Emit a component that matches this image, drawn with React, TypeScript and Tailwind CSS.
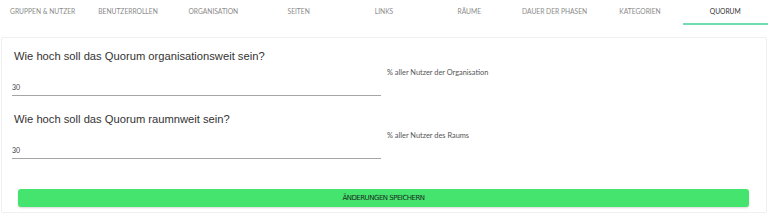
import React from "react";

const tabs = [
  "Gruppen & Nutzer",
  "Benutzerrollen",
  "Organisation",
  "Seiten",
  "Links",
  "Räume",
  "Dauer der Phasen",
  "Kategorien",
  "Quorum",
];

function Field({ question, label, value }: { question: string; label: string; value: string }) {
  return (
    <div className="flex">
      <div className="w-[369px] shrink-0">
        <div className="h-[24px] pl-[2px] text-[11.2px] leading-[24px] text-[#333] font-['Liberation_Sans',Arial,sans-serif]">
          {question}
        </div>
        <input
          defaultValue={value}
          className="block w-full h-[28px] pt-[11px] pb-0 px-0 text-[7px] text-[#444] border-0 border-b border-[#a5a5a5] outline-none bg-transparent font-['Lato',sans-serif]"
        />
      </div>
      <div className="flex items-center pl-[6px] pt-[6px] text-[7.4px] text-[#555] font-['Lato',sans-serif]">
        {label}
      </div>
    </div>
  );
}

export default function App() {
  return (
    <div className="w-[768px] h-[214px] bg-white overflow-hidden">
      <nav className="flex h-[25px]">
        {tabs.map((t) => (
          <div
            key={t}
            className={
              t === "Quorum"
                ? "flex-1 flex items-center justify-center uppercase text-[6.7px] text-[#333] border-b-2 border-[#6fdcb2] font-['Lato',sans-serif]"
                : "flex-1 flex items-center justify-center uppercase text-[6.7px] text-[#8a8a8a] border-b-2 border-transparent font-['Lato',sans-serif]"
            }
          >
            {t}
          </div>
        ))}
      </nav>
      <div className="mt-[12px] mx-[1px] h-[176px] border border-[#f0f0f0] rounded-[2px] pt-[6px] pl-[10px] pr-[10px]">
        <Field
          question="Wie hoch soll das Quorum organisationsweit sein?"
          label="% aller Nutzer der Organisation"
          value="30"
        />
        <div className="h-[11px]" />
        <Field
          question="Wie hoch soll das Quorum raumnweit sein?"
          label="% aller Nutzer des Raums"
          value="30"
        />
        <div className="mt-[23px] pl-[6px] pr-[7px]">
          <button className="w-full h-[18px] rounded-[3px] bg-[#45e46e] shadow-[0_1px_2px_rgba(0,0,0,0.15)] text-[7px] text-[#1a2e1e] uppercase font-['DejaVu_Sans',sans-serif] tracking-[-0.5px]">
            Änderungen speichern
          </button>
        </div>
      </div>
    </div>
  );
}
